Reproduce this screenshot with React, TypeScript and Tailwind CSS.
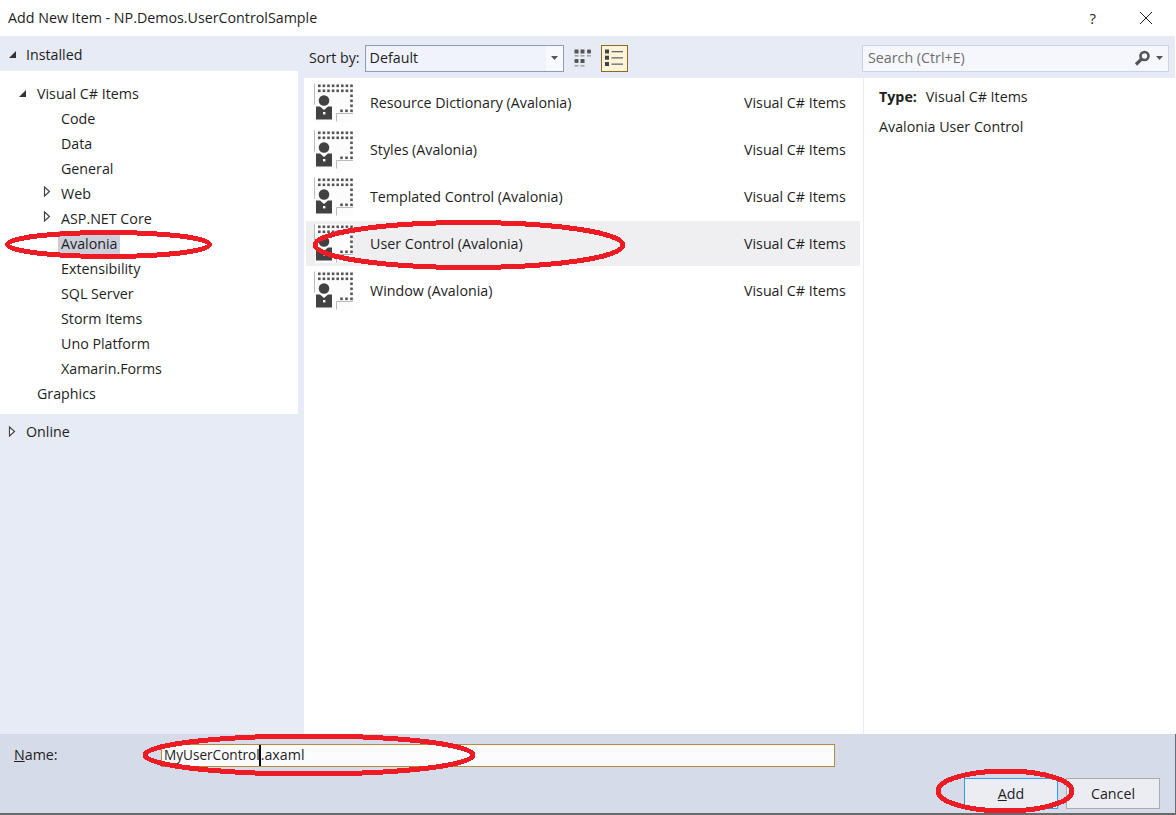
import React from 'react';

const treeItems = [
  { label: 'Code' },
  { label: 'Data' },
  { label: 'General' },
  { label: 'Web', arrow: true },
  { label: 'ASP.NET Core', arrow: true },
  { label: 'Avalonia', selected: true },
  { label: 'Extensibility' },
  { label: 'SQL Server' },
  { label: 'Storm Items' },
  { label: 'Uno Platform' },
  { label: 'Xamarin.Forms' },
];

const templates = [
  'Resource Dictionary (Avalonia)',
  'Styles (Avalonia)',
  'Templated Control (Avalonia)',
  'User Control (Avalonia)',
  'Window (Avalonia)',
];

const Expanded = () => (
  <svg width="9" height="9" viewBox="0 0 9 9" className="shrink-0">
    <path d="M8 1V8H1Z" fill="#333" />
  </svg>
);

const Collapsed = () => (
  <svg width="8" height="11" viewBox="0 0 8 11" className="shrink-0">
    <path d="M1.5 1L6.5 5.5L1.5 10Z" fill="#fff" stroke="#444" strokeWidth="1.2" />
  </svg>
);

const dotsTop = [0, 1, 2, 3, 4, 5, 6, 7];

const ItemIcon = () => (
  <svg width="40" height="40" viewBox="0 0 40 40" className="shrink-0">
    <rect x="1" y="0" width="38" height="39" fill="#fcfcfc" />
    <path d="M0.5 0.5V21.5H-1" stroke="#bbb" fill="none" />
    <path d="M22.5 38.5V30.5H39" stroke="#bbb" fill="none" />
    {dotsTop.map((i) => (
      <g key={i} fill="#555">
        <rect x={4 + i * 4.6} y="1.5" width="2.6" height="2.6" />
        <rect x={4 + i * 4.6} y="6.5" width="2.6" height="2.6" />
      </g>
    ))}
    {[11.5, 16.5, 21.5, 26.5].map((y) => (
      <rect key={y} x="36.2" y={y} width="2.6" height="2.6" fill="#555" />
    ))}
    {[26.2, 31.2].map((x) => (
      <rect key={x} x={x} y="26.5" width="2.6" height="2.6" fill="#555" />
    ))}
    <circle cx="10" cy="17.5" r="5.3" fill="#424242" />
    <path d="M2 23.5H6L10 27L14 23.5H18V36.5H2Z" fill="#424242" />
    <rect x="9" y="29" width="2.4" height="2.4" fill="#fff" />
  </svg>
);

const ThumbsIcon = () => (
  <svg width="18" height="18" viewBox="0 0 18 18">
    <g fill="#555">
      <rect x="0.5" y="0.5" width="4" height="4" />
      <rect x="6.5" y="0.5" width="4" height="4" />
      <rect x="13" y="0.5" width="4" height="4" rx="1" />
      <rect x="0.5" y="10" width="4" height="4" rx="1" />
      <rect x="6.5" y="10" width="4" height="4" />
    </g>
    <g fill="#a5a5a5">
      <rect x="0.5" y="6" width="4" height="1.6" />
      <rect x="6.5" y="6" width="4" height="1.6" />
      <rect x="13" y="6" width="4" height="1.6" />
      <rect x="0.5" y="16" width="4" height="1.6" />
      <rect x="6.5" y="16" width="4" height="1.6" />
    </g>
  </svg>
);

const ListIcon = () => (
  <svg width="18" height="18" viewBox="0 0 18 18">
    <g fill="#424242">
      <rect x="0" y="0.5" width="4" height="4" />
      <rect x="0" y="6.7" width="4" height="4" />
      <rect x="0" y="13" width="4" height="4" />
    </g>
    <g fill="#666">
      <rect x="6.5" y="2" width="11.5" height="1.3" />
      <rect x="6.5" y="8.2" width="11.5" height="1.3" />
      <rect x="6.5" y="14.5" width="11.5" height="1.3" />
    </g>
  </svg>
);

const SearchIcon = () => (
  <svg width="17" height="17" viewBox="0 0 17 17">
    <circle cx="10.5" cy="6" r="4" fill="none" stroke="#555" strokeWidth="2.6" />
    <path d="M7.5 9L2 14.5" stroke="#555" strokeWidth="3.2" />
  </svg>
);

const Caret = () => (
  <svg width="7" height="4" viewBox="0 0 7 4">
    <path d="M0 0H7L3.5 4Z" fill="#555" />
  </svg>
);

export default function App() {
  return (
    <div
      className="relative flex h-[815px] w-[1176px] flex-col overflow-hidden bg-white text-[14.25px] text-[#1e1e1e]"
      style={{ fontFamily: '"Open Sans", "Noto Sans", sans-serif' }}
    >
      {/* title bar */}
      <div className="flex h-9 shrink-0 items-center justify-between pl-2 pr-[23px]">
        <span>Add New Item - NP.Demos.UserControlSample</span>
        <div className="flex items-center gap-[43px]">
          <span className="text-[15px]">?</span>
          <svg width="14" height="14" viewBox="0 0 14 14">
            <path d="M1 1L13 13M13 1L1 13" stroke="#222" strokeWidth="1" />
          </svg>
        </div>
      </div>

      {/* body */}
      <div className="flex min-h-0 flex-1 border-r border-white bg-[#e6ebf5]">
        <div className="flex w-[298px] shrink-0 flex-col">
          <div className="flex h-[35px] shrink-0 items-center gap-[9px] pl-[8px] pt-[2px]">
            <Expanded />
            <span>Installed</span>
          </div>
          <div className="bg-white pb-2 pt-[10px]">
            <div className="flex h-[25px] items-center gap-[10px] pl-[18px]">
              <Expanded />
              <span>Visual C# Items</span>
            </div>
            {treeItems.map((t) => (
              <div key={t.label} className="relative flex h-[25px] items-center pl-[61px]">
                {t.arrow && (
                  <span className="absolute left-[43px] top-[5px]">
                    <Collapsed />
                  </span>
                )}
                <span className={t.selected ? '-ml-[3px] bg-[#cccedb] px-[3px] leading-[25px]' : ''}>{t.label}</span>
              </div>
            ))}
            <div className="flex h-[25px] items-center pl-[37px]">Graphics</div>
          </div>
          <div className="flex h-[35px] items-center gap-[10px] pl-[8px]">
            <Collapsed />
            <span>Online</span>
          </div>
        </div>

        <div className="flex min-w-0 flex-1 flex-col">
          {/* toolbar */}
          <div className="flex h-[42px] shrink-0 items-center pl-[11px] pr-[6px] pt-[2px]">
            <span className="mr-[5px]">Sort by:</span>
            <div className="flex h-[27px] w-[199px] items-center border border-[#8e9bbc] bg-[#f0f3fb]">
              <span className="flex-1 pl-1">Default</span>
              <div className="flex h-full w-[17px] items-center justify-center bg-[#f8f9fc]">
                <Caret />
              </div>
            </div>
            <div className="ml-[6px] flex h-[27px] w-[27px] items-center justify-center">
              <ThumbsIcon />
            </div>
            <div className="ml-[4px] flex h-[27px] w-[27px] items-center justify-center border border-[#8a6a1f] bg-[#fdf4d9]">
              <ListIcon />
            </div>
            <div className="ml-auto flex h-[27px] w-[307px] items-center justify-between border border-[#ccd3e3] bg-[#f5f7fc] pl-[5px] pr-[5px]">
              <span className="text-[#6d6d6d]">Search (Ctrl+E)</span>
              <div className="flex items-center gap-[5px]">
                <SearchIcon />
                <Caret />
              </div>
            </div>
          </div>

          <div className="ml-[6px] flex min-h-0 flex-1 bg-white pl-[2px]">
            <div className="w-[554px] shrink-0 pt-[2px]">
              {templates.map((name, i) => (
                <div
                  key={name}
                  className={`mb-[2px] flex h-[45px] items-center pl-[8px] ${i === 3 ? 'bg-[#efeff2]' : ''}`}
                >
                  <ItemIcon />
                  <span className="ml-[16px] w-[374px]">{name}</span>
                  <span>Visual C# Items</span>
                </div>
              ))}
            </div>
            <div className="ml-[3px] flex-1 border-l border-[#e6ebf5] pl-[15px] pt-[7px]">
              <div className="flex h-[24px] items-center">
                <span className="font-bold">Type:</span>
                <span className="ml-[9px]">Visual C# Items</span>
              </div>
              <div className="mt-[6px] flex h-[24px] items-center">Avalonia User Control</div>
            </div>
          </div>
        </div>
      </div>

      {/* name row and buttons */}
      <div className="h-[81px] shrink-0 border-b-2 border-r border-[#6b6b6b] bg-[#d6dbe9]">
        <div className="flex h-[42px] items-center pl-[14px]">
          <span className="w-[147px]">
            <span className="underline">N</span>ame:
          </span>
          <div className="flex h-[23px] w-[674px] items-center border border-[#b58a3a] bg-[#fcfcfc] pl-[2px]">
            <span className="relative text-[13.6px]">
              MyUserControl
              <span className="absolute -right-[1px] top-0 h-[21px] w-[2px] bg-black" />
            </span>
            <span className="ml-[1px]">.axaml</span>
          </div>
        </div>
        <div className="mt-[2px] flex justify-end gap-2 pr-[15px]">
          <button className="h-[31px] w-[94px] border border-[#3399ff] bg-[#ecedf2]">
            <span className="underline">A</span>dd
          </button>
          <button className="h-[31px] w-[94px] border border-[#acacac] bg-[#ecedf2]">Cancel</button>
        </div>
      </div>

      {/* red hand-drawn annotation marks */}
      <svg className="pointer-events-none absolute left-0 top-0" width="1176" height="815">
        <g fill="none" stroke="#ed1c24" strokeWidth="5" shapeRendering="crispEdges">
          <ellipse cx="108.5" cy="244.5" rx="101" ry="12" />
          <ellipse cx="469" cy="245" rx="154" ry="22.5" />
          <ellipse cx="309" cy="755" rx="164" ry="19" />
          <ellipse cx="1005" cy="791" rx="67" ry="20" />
        </g>
      </svg>
    </div>
  );
}
